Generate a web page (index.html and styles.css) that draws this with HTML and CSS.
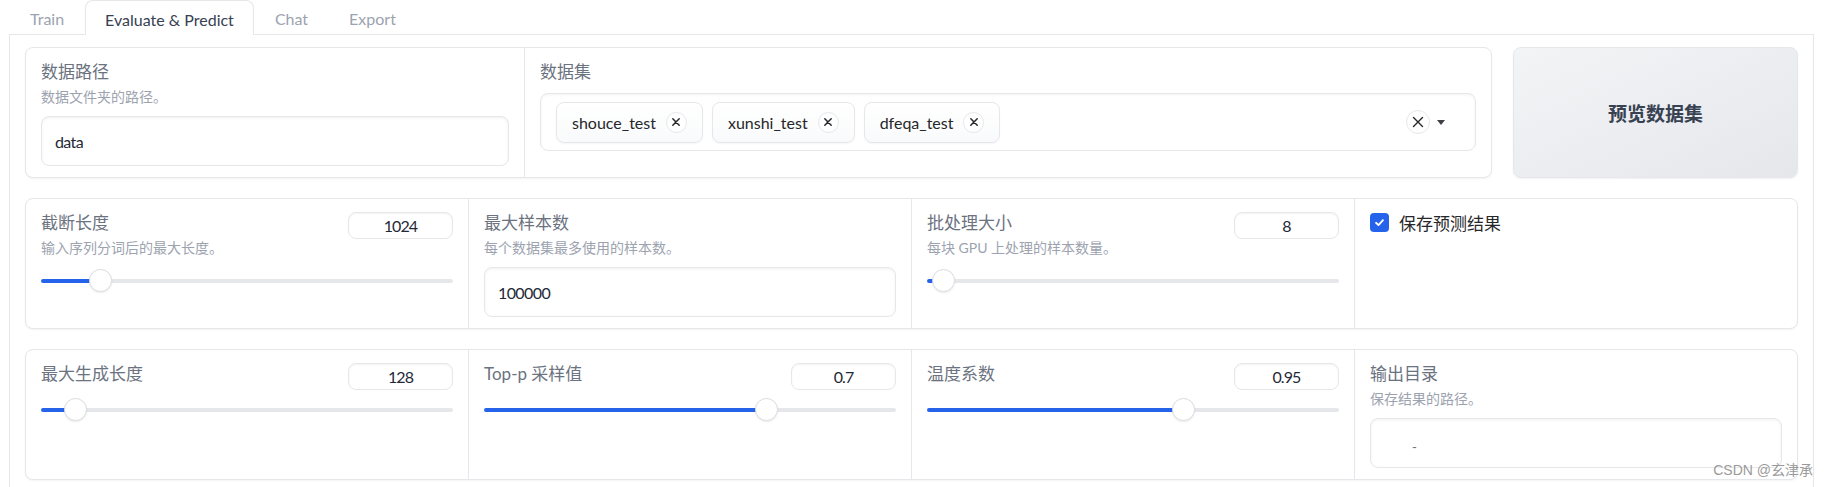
FILE: index.html
```html
<!DOCTYPE html>
<html lang="zh-CN">
<head>
<meta charset="utf-8">
<title>Evaluate &amp; Predict</title>
<link rel="stylesheet" href="styles.css">
</head>
<body>
<div class="app">
  <div class="tab-nav">
    <button class="tab">Train</button>
    <button class="tab active">Evaluate &amp; Predict</button>
    <button class="tab">Chat</button>
    <button class="tab">Export</button>
  </div>
  <div class="panel">
    <div class="row row-data">
      <div class="box box-data">
        <div class="col col-path">
          <div class="head"><span class="label">数据路径</span></div>
          <div class="info">数据文件夹的路径。</div>
          <input class="textbox" type="text" value="data">
        </div>
        <div class="col col-dataset">
          <div class="head"><span class="label">数据集</span></div>
          <div class="multiselect">
            <div class="chips">
              <span class="chip">shouce_test<span class="chip-x"><svg viewBox="0 0 10 10" width="10" height="10"><path d="M1.8 1.8 L8.2 8.2 M8.2 1.8 L1.8 8.2" stroke="#27272a" stroke-width="1.5" stroke-linecap="round"/></svg></span></span>
              <span class="chip">xunshi_test<span class="chip-x"><svg viewBox="0 0 10 10" width="10" height="10"><path d="M1.8 1.8 L8.2 8.2 M8.2 1.8 L1.8 8.2" stroke="#27272a" stroke-width="1.5" stroke-linecap="round"/></svg></span></span>
              <span class="chip">dfeqa_test<span class="chip-x"><svg viewBox="0 0 10 10" width="10" height="10"><path d="M1.8 1.8 L8.2 8.2 M8.2 1.8 L1.8 8.2" stroke="#27272a" stroke-width="1.5" stroke-linecap="round"/></svg></span></span>
            </div>
            <div class="ms-controls">
              <span class="clear-all"><svg viewBox="0 0 12 12" width="12" height="12"><path d="M1.5 1.5 L10.5 10.5 M10.5 1.5 L1.5 10.5" stroke="#27272a" stroke-width="1.4" stroke-linecap="round"/></svg></span>
              <svg class="caret" viewBox="0 0 8 5" width="8" height="5"><polygon points="0,0 8,0 4,5" fill="#3f3f46"/></svg>
            </div>
          </div>
        </div>
      </div>
      <button class="preview-btn">预览数据集</button>
    </div>

    <div class="box grid4">
      <div class="col">
        <div class="head"><span class="label">截断长度</span><input class="num" type="number" value="1024"></div>
        <div class="info">输入序列分词后的最大长度。</div>
        <input class="slider slider-after-info" type="range" min="4" max="8192" value="1024" style="--p:0.1246">
      </div>
      <div class="col">
        <div class="head"><span class="label">最大样本数</span></div>
        <div class="info">每个数据集最多使用的样本数。</div>
        <input class="textbox" type="text" value="100000">
      </div>
      <div class="col">
        <div class="head"><span class="label">批处理大小</span><input class="num" type="number" value="8"></div>
        <div class="info">每块 GPU 上处理的样本数量。</div>
        <input class="slider slider-after-info" type="range" min="1" max="512" value="8" style="--p:0.0137">
      </div>
      <div class="col">
        <label class="check-row">
          <span class="checkbox"><svg viewBox="0 0 12 12" width="11" height="11"><path d="M2.2 6.3 L4.9 8.8 L9.8 3.4" fill="none" stroke="#fff" stroke-width="2" stroke-linecap="round" stroke-linejoin="round"/></svg></span>
          <span class="check-label">保存预测结果</span>
        </label>
      </div>
    </div>

    <div class="box grid4">
      <div class="col">
        <div class="head"><span class="label">最大生成长度</span><input class="num" type="number" value="128"></div>
        <input class="slider slider-after-head" type="range" min="8" max="2048" value="128" style="--p:0.0588">
      </div>
      <div class="col">
        <div class="head"><span class="label">Top-p 采样值</span><input class="num" type="number" value="0.7"></div>
        <input class="slider slider-after-head" type="range" min="0.01" max="1" step="0.01" value="0.7" style="--p:0.697">
      </div>
      <div class="col">
        <div class="head"><span class="label">温度系数</span><input class="num" type="number" value="0.95"></div>
        <input class="slider slider-after-head" type="range" min="0.01" max="1.5" step="0.01" value="0.95" style="--p:0.6309">
      </div>
      <div class="col">
        <div class="head"><span class="label">输出目录</span></div>
        <div class="info">保存结果的路径。</div>
        <div class="textbox textbox-masked"><span class="mask">-</span></div>
      </div>
    </div>
  </div>
  <div class="watermark">CSDN @玄津承</div>
</div>
</body>
</html>
```

FILE: styles.css
```css
* {
  box-sizing: border-box;
}

html, body {
  margin: 0;
  background: #ffffff;
}

body {
  font-family: "Lato", "Noto Sans CJK SC", sans-serif;
  color: #1f2937;
}

.app {
  position: relative;
  height: 487px;
  overflow: hidden;
  padding: 0 15px 0 9px;
}

/* ---------- tabs ---------- */
.tab-nav {
  display: flex;
  align-items: flex-start;
  height: 34px;
  padding-left: 1px;
  gap: 1px;
}

.tab {
  font: inherit;
  font-size: 16px;
  letter-spacing: 0;
  line-height: 24px;
  height: 34px;
  padding: 3px 19px 0;
  margin: 0;
  background: transparent;
  border: 1px solid transparent;
  border-bottom: none;
  border-radius: 8px 8px 0 0;
  color: #9ca3af;
  cursor: pointer;
}

.tab.active {
  position: relative;
  z-index: 1;
  height: 35px;
  background: #ffffff;
  border-color: #e5e7eb;
  color: #374151;
}

/* ---------- panel ---------- */
.panel {
  border: 1px solid #e5e7eb;
  padding: 12px 15px;
  display: flex;
  flex-direction: column;
  gap: 20px;
  min-height: 470px;
}

.row-data {
  display: flex;
  gap: 21px;
}

.box {
  display: flex;
  background: #ffffff;
  border: 1px solid #e5e7eb;
  border-radius: 8px;
  box-shadow: 0 1px 2px rgba(0, 0, 0, 0.05);
}

.box-data {
  flex: 1 1 0;
  min-width: 0;
}

.col {
  padding: 13px 15px 11px;
  display: flex;
  flex-direction: column;
  min-width: 0;
}

.col + .col {
  border-left: 1px solid #e5e7eb;
}

.col-path {
  flex: 0 0 498px;
}

.col-dataset {
  flex: 1 1 0;
}

.grid4 .col {
  flex: 1 1 0;
}

.head {
  display: flex;
  justify-content: space-between;
  align-items: flex-start;
  min-height: 27px;
}

.label {
  font-size: 17px;
  line-height: 22px;
  color: #6b7280;
  white-space: nowrap;
}

.info {
  font-size: 14px;
  line-height: 18px;
  color: #9ca3af;
  white-space: nowrap;
}

/* ---------- inputs ---------- */
.textbox {
  display: flex;
  align-items: center;
  width: 100%;
  height: 50px;
  margin-top: 10px;
  padding: 0 13px;
  font: inherit;
  font-size: 16px;
  letter-spacing: -0.6px;
  color: #1f2937;
  background: #ffffff;
  border: 1px solid #e5e7eb;
  border-radius: 8px;
  box-shadow: inset 0 1px 3px rgba(0, 0, 0, 0.06);
  outline: none;
}

.textbox-masked {
  padding-left: 41px;
}

.mask {
  font-size: 13px;
  color: #6b7280;
  padding-top: 8px;
}

.num {
  width: 105px;
  height: 27px;
  padding: 0 6px;
  font: inherit;
  font-size: 16px;
  letter-spacing: -0.9px;
  color: #1f2937;
  text-align: center;
  background: #ffffff;
  border: 1px solid #e5e7eb;
  border-radius: 8px;
  box-shadow: inset 0 1px 2px rgba(0, 0, 0, 0.05);
  outline: none;
  -moz-appearance: textfield;
}

.num::-webkit-inner-spin-button,
.num::-webkit-outer-spin-button {
  -webkit-appearance: none;
  margin: 0;
}

/* ---------- sliders ---------- */
.slider {
  -webkit-appearance: none;
  appearance: none;
  width: 100%;
  height: 23px;
  margin: 0;
  padding: 0;
  background: transparent;
}

.slider-after-info {
  margin-top: 12px;
}

.slider-after-head {
  margin-top: 8px;
}

.slider::-webkit-slider-runnable-track {
  height: 4px;
  border-radius: 2px;
  background: linear-gradient(to right,
    #2563eb calc(11.5px + var(--p) * (100% - 23px)),
    #e5e7eb 0);
}

.slider::-webkit-slider-thumb {
  -webkit-appearance: none;
  appearance: none;
  width: 23px;
  height: 23px;
  margin-top: -9.5px;
  border-radius: 50%;
  background: #ffffff;
  border: 1px solid #dcdde2;
  box-shadow: 0 1px 2px rgba(0, 0, 0, 0.08);
}

/* ---------- multiselect ---------- */
.multiselect {
  margin-top: 5px;
  height: 58px;
  display: flex;
  align-items: center;
  padding: 0 30px 0 15px;
  border: 1px solid #e5e7eb;
  border-radius: 8px;
  box-shadow: inset 0 1px 3px rgba(0, 0, 0, 0.05);
}

.chips {
  flex: 1;
  display: flex;
  gap: 9px;
}

.chip {
  display: inline-flex;
  align-items: center;
  gap: 10px;
  height: 41px;
  padding: 0 15px;
  font-size: 16px;
  color: #27272a;
  background: linear-gradient(to bottom, #ffffff, #f9fafb);
  border: 1px solid #e5e7eb;
  border-radius: 8px;
  box-shadow: 0 1px 2px rgba(0, 0, 0, 0.04);
}

.chip-x {
  flex: none;
  display: inline-flex;
  align-items: center;
  justify-content: center;
  width: 21px;
  height: 21px;
  border-radius: 50%;
  background: #ffffff;
  border: 1px solid #e5e7eb;
}

.ms-controls {
  flex: none;
  display: flex;
  align-items: center;
  gap: 7px;
}

.clear-all {
  flex: none;
  display: inline-flex;
  align-items: center;
  justify-content: center;
  width: 24px;
  height: 24px;
  border-radius: 50%;
  background: #ffffff;
  border: 1px solid #e5e7eb;
}

.caret {
  display: block;
  flex: none;
}

/* ---------- button ---------- */
.preview-btn {
  flex: 0 0 285px;
  font-family: inherit;
  font-size: 19px;
  font-weight: 700;
  color: #374151;
  background: linear-gradient(to bottom right, #f3f4f6, #e5e7eb);
  border: 1px solid #e5e7eb;
  border-radius: 8px;
  box-shadow: 0 1px 2px rgba(0, 0, 0, 0.06);
  cursor: pointer;
}

/* ---------- checkbox ---------- */
.check-row {
  display: flex;
  align-items: center;
  gap: 10px;
  height: 24px;
  margin-top: -2px;
}

.checkbox {
  flex: none;
  display: inline-flex;
  align-items: center;
  justify-content: center;
  width: 19px;
  height: 19px;
  border-radius: 4px;
  background: #2563eb;
}

.check-label {
  font-size: 17px;
  color: #27272a;
}

/* ---------- watermark ---------- */
.watermark {
  position: absolute;
  right: 16px;
  bottom: 8px;
  font-family: "Liberation Sans", "Noto Sans CJK SC", sans-serif;
  font-size: 14px;
  line-height: 17px;
  color: #9a9a9a;
  text-shadow: 0 0 2px #ffffff;
}
```
